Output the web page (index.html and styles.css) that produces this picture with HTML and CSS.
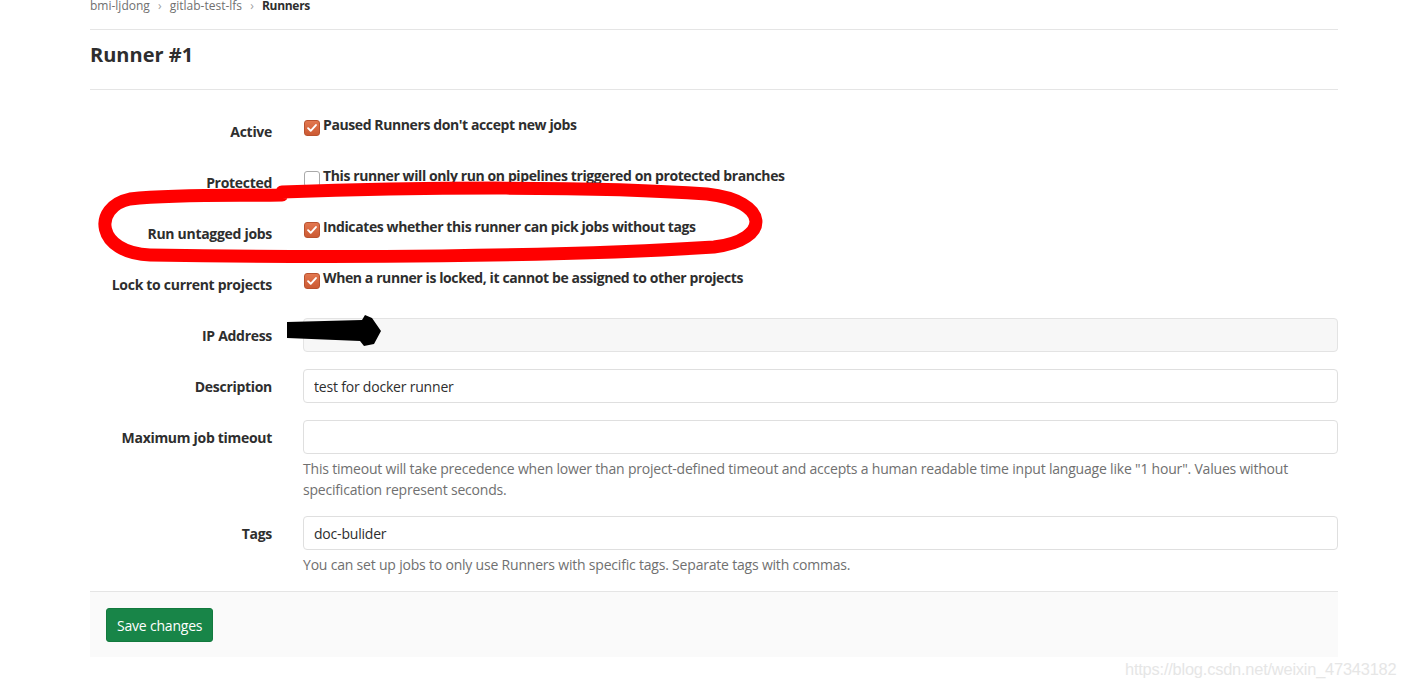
FILE: index.html
```html
<!DOCTYPE html>
<html lang="en">
<head>
    <meta charset="UTF-8">
    <title>Runner #1 · Runners · gitlab-test-lfs</title>
    <link rel="stylesheet" href="styles.css">
</head>
<body>
    <div class="content">
        <!-- Breadcrumbs -->
        <div class="breadcrumbs">
            <a href="#">bmi-ljdong</a>
            <span class="sep">&rsaquo;</span>
            <a href="#">gitlab-test-lfs</a>
            <span class="sep">&rsaquo;</span>
            <strong>Runners</strong>
        </div>

        <h2 class="page-title">Runner #1</h2>

        <!-- Runner form -->
        <form class="runner-form">
            <div class="form-group">
                <label class="form-label">Active</label>
                <div class="form-control-wrap">
                    <label class="check">
                        <span class="box checked"><svg viewBox="0 0 16 16"><path d="M3.5 8.2l3 3 6-6.6" /></svg></span>
                        Paused Runners don't accept new jobs
                    </label>
                </div>
            </div>
            <div class="form-group">
                <label class="form-label">Protected</label>
                <div class="form-control-wrap">
                    <label class="check">
                        <span class="box"></span>
                        This runner will only run on pipelines triggered on protected branches
                    </label>
                </div>
            </div>
            <div class="form-group">
                <label class="form-label">Run untagged jobs</label>
                <div class="form-control-wrap">
                    <label class="check">
                        <span class="box checked"><svg viewBox="0 0 16 16"><path d="M3.5 8.2l3 3 6-6.6" /></svg></span>
                        Indicates whether this runner can pick jobs without tags
                    </label>
                </div>
            </div>
            <div class="form-group">
                <label class="form-label">Lock to current projects</label>
                <div class="form-control-wrap">
                    <label class="check">
                        <span class="box checked"><svg viewBox="0 0 16 16"><path d="M3.5 8.2l3 3 6-6.6" /></svg></span>
                        When a runner is locked, it cannot be assigned to other projects
                    </label>
                </div>
            </div>
            <div class="form-group">
                <label class="form-label">IP Address</label>
                <div class="form-control-wrap">
                    <input class="input" type="text" value="" disabled>
                </div>
            </div>
            <div class="form-group">
                <label class="form-label">Description</label>
                <div class="form-control-wrap">
                    <input class="input" type="text" value="test for docker runner">
                </div>
            </div>
            <div class="form-group tall">
                <label class="form-label">Maximum job timeout</label>
                <div class="form-control-wrap">
                    <input class="input" type="text" value="">
                    <p class="help">This timeout will take precedence when lower than project-defined timeout and accepts a human readable time input language like "1 hour". Values without specification represent seconds.</p>
                </div>
            </div>
            <div class="form-group tall last">
                <label class="form-label">Tags</label>
                <div class="form-control-wrap">
                    <input class="input" type="text" value="doc-bulider">
                    <p class="help">You can set up jobs to only use Runners with specific tags. Separate tags with commas.</p>
                </div>
            </div>

            <div class="form-actions">
                <button type="button" class="btn-save">Save changes</button>
            </div>
        </form>
    </div>

    <!-- Annotations drawn over the screenshot -->
    <svg class="markup" width="1406" height="689" viewBox="0 0 1406 689">
        <path class="red-loop" d="M282 192 C 420 187, 600 186, 707 194 C 770 201, 772 240, 714 247 C 560 257, 330 258, 150 255 C 96 253, 92 207, 130 199 C 180 194, 240 196, 282 195" />
        <path class="black-mark" d="M287 322 L 362 320 L 365 315 L 372 318 L 381 331 L 374 344 L 364 346 L 360 341 L 287 338 Z" />
    </svg>
    <div class="watermark">https://blog.csdn.net/weixin_47343182</div>
</body>
</html>
```

FILE: styles.css
```css
body {
    margin: 0;
    padding: 0;
    font-family: 'Open Sans', 'Noto Sans', sans-serif;
    font-size: 14px;
    letter-spacing: -0.2px;
    color: #2e2e2e;
    background: #fff;
}

.content {
    width: 1248px;
    margin-left: 90px;
}

/* Breadcrumbs */
.breadcrumbs {
    height: 29px;
    line-height: 11px;
    font-size: 12px;
    letter-spacing: 0;
    border-bottom: 1px solid #e5e5e5;
    color: #707070;
}

.breadcrumbs a {
    color: #707070;
    text-decoration: none;
}

.breadcrumbs .sep {
    color: #a0a0a0;
    margin: 0 5px;
}

.breadcrumbs strong {
    color: #2e2e2e;
    letter-spacing: -0.3px;
}

.page-title {
    margin: 0;
    height: 59px;
    line-height: 50px;
    font-size: 20px;
    font-weight: bold;
    letter-spacing: 0;
    border-bottom: 1px solid #e5e5e5;
}

/* Form */
.runner-form {
    padding-top: 24px;
}

.form-group {
    display: grid;
    grid-template-columns: 182px 1fr;
    column-gap: 31px;
    margin-bottom: 17px;
}

.form-group.tall {
    margin-bottom: 16px;
}

.form-label {
    text-align: right;
    font-weight: bold;
    letter-spacing: -0.3px;
    line-height: 36px;
    height: 34px;
}

.check {
    display: flex;
    align-items: center;
    gap: 3px;
    font-weight: bold;
    letter-spacing: -0.4px;
    height: 22px;
    line-height: 22px;
}

.box {
    width: 14px;
    height: 14px;
    margin: 5px 0 0 1px;
    border: 1px solid #a9a9a9;
    border-radius: 3px;
    background: #fff;
    flex-shrink: 0;
    display: flex;
}

.box.checked {
    background: linear-gradient(#e2774f, #cc5a33);
    border-color: #b9522f;
}

.box svg {
    width: 14px;
    height: 14px;
    fill: none;
    stroke: #fff;
    stroke-width: 2.2;
    stroke-linecap: round;
    stroke-linejoin: round;
}

.input {
    box-sizing: border-box;
    width: 100%;
    height: 34px;
    padding: 0 10px;
    border: 1px solid #dfdfdf;
    border-radius: 4px;
    font-family: inherit;
    font-size: 14px;
    letter-spacing: -0.2px;
    color: #2e2e2e;
    background: #fff;
    display: block;
}

.input:disabled {
    background: #f7f7f7;
    border-color: #e3e3e3;
}

.help {
    margin: 4px 0 0;
    line-height: 21px;
    color: #707070;
}

.form-group.last {
    margin-bottom: 0;
    padding-bottom: 16px;
}

.form-actions {
    background: #fafafa;
    border-top: 1px solid #e5e5e5;
    padding: 16px 16px 15px;
}

.btn-save {
    height: 34px;
    padding: 0 10px;
    border: 1px solid #137a3e;
    border-radius: 3px;
    background: #188548;
    color: #fff;
    font-family: inherit;
    font-size: 14px;
    letter-spacing: -0.2px;
}

/* Annotation overlay */
.markup {
    position: absolute;
    top: 0;
    left: 0;
    pointer-events: none;
}

.red-loop {
    fill: none;
    stroke: #ff0000;
    stroke-width: 13;
    stroke-linecap: round;
    stroke-linejoin: round;
}

.black-mark {
    fill: #000;
}

.watermark {
    position: absolute;
    left: 1125px;
    top: 660px;
    font-family: 'Liberation Sans', Arial, sans-serif;
    font-size: 16.4px;
    color: #e6e6e6;
}
```
